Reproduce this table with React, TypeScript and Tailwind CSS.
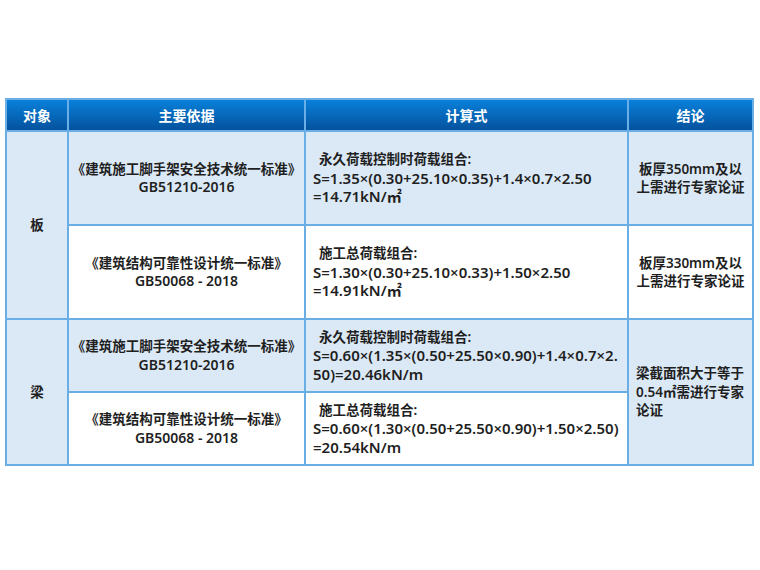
const font = { fontFamily: '"Noto Sans", "Noto Sans CJK SC", sans-serif' };

const cell = 'border-2 border-[#6aaee6] text-[13.5px] leading-[18.5px] text-[#1f1f1f]';

function Basis({ title, code }: { title: string; code: string }) {
  return (
    <td className={`${cell} text-center font-semibold`}>
      <div>{title}</div>
      <div className="text-[14px]">{code}</div>
    </td>
  );
}

function Formula({ lines }: { lines: string[] }) {
  return (
    <td className={`${cell} pl-[7px] pr-1 text-left font-semibold`}>
      {lines.map((l, i) => (
        <div key={i} className={i === 0 ? 'pl-[6px]' : 'text-[15px] whitespace-nowrap'}>{l}</div>
      ))}
    </td>
  );
}

export default function App() {
  return (
    <div className="w-[760px] h-[570px] bg-white pt-[98px] pl-[5px]" style={font}>
      <table className="border-collapse w-[747px] table-fixed">
        <colgroup>
          <col className="w-[62px]" />
          <col className="w-[237px]" />
          <col className="w-[323px]" />
          <col className="w-[125px]" />
        </colgroup>
        <thead>
          <tr className="h-[32px] bg-gradient-to-b from-[#0a82dc] to-[#04519b]">
            {['对象', '主要依据', '计算式', '结论'].map((h) => (
              <th key={h} className="border-2 border-[#6aaee6] text-white text-[14px] font-bold text-center">
                {h}
              </th>
            ))}
          </tr>
        </thead>
        <tbody>
          <tr className="h-[94px] bg-[#dbe9f6]">
            <td rowSpan={2} className={`${cell} text-center font-semibold bg-[#dbe9f6]`}>板</td>
            <Basis title="《建筑施工脚手架安全技术统一标准》" code="GB51210-2016" />
            <Formula lines={['永久荷载控制时荷载组合:', 'S=1.35×(0.30+25.10×0.35)+1.4×0.7×2.50', '=14.71kN/㎡']} />
            <td className={`${cell} text-center font-semibold`}>
              <div>板厚350mm及以</div>
              <div>上需进行专家论证</div>
            </td>
          </tr>
          <tr className="h-[94px] bg-white">
            <Basis title="《建筑结构可靠性设计统一标准》" code="GB50068 - 2018" />
            <Formula lines={['施工总荷载组合:', 'S=1.30×(0.30+25.10×0.33)+1.50×2.50', '=14.91kN/㎡']} />
            <td className={`${cell} text-center font-semibold`}>
              <div>板厚330mm及以</div>
              <div>上需进行专家论证</div>
            </td>
          </tr>
          <tr className="h-[73px] bg-[#dbe9f6]">
            <td rowSpan={2} className={`${cell} text-center font-semibold bg-[#dbe9f6]`}>梁</td>
            <Basis title="《建筑施工脚手架安全技术统一标准》" code="GB51210-2016" />
            <Formula lines={['永久荷载控制时荷载组合:', 'S=0.60×(1.35×(0.50+25.50×0.90)+1.4×0.7×2.', '50)=20.46kN/m']} />
            <td rowSpan={2} className={`${cell} text-left font-semibold bg-[#dbe9f6] pl-[7px]`}>
              <div>梁截面积大于等于</div>
              <div>0.54㎡需进行专家</div>
              <div>论证</div>
            </td>
          </tr>
          <tr className="h-[73px] bg-white">
            <Basis title="《建筑结构可靠性设计统一标准》" code="GB50068 - 2018" />
            <Formula lines={['施工总荷载组合:', 'S=0.60×(1.30×(0.50+25.50×0.90)+1.50×2.50)', '=20.54kN/m']} />
          </tr>
        </tbody>
      </table>
    </div>
  );
}
